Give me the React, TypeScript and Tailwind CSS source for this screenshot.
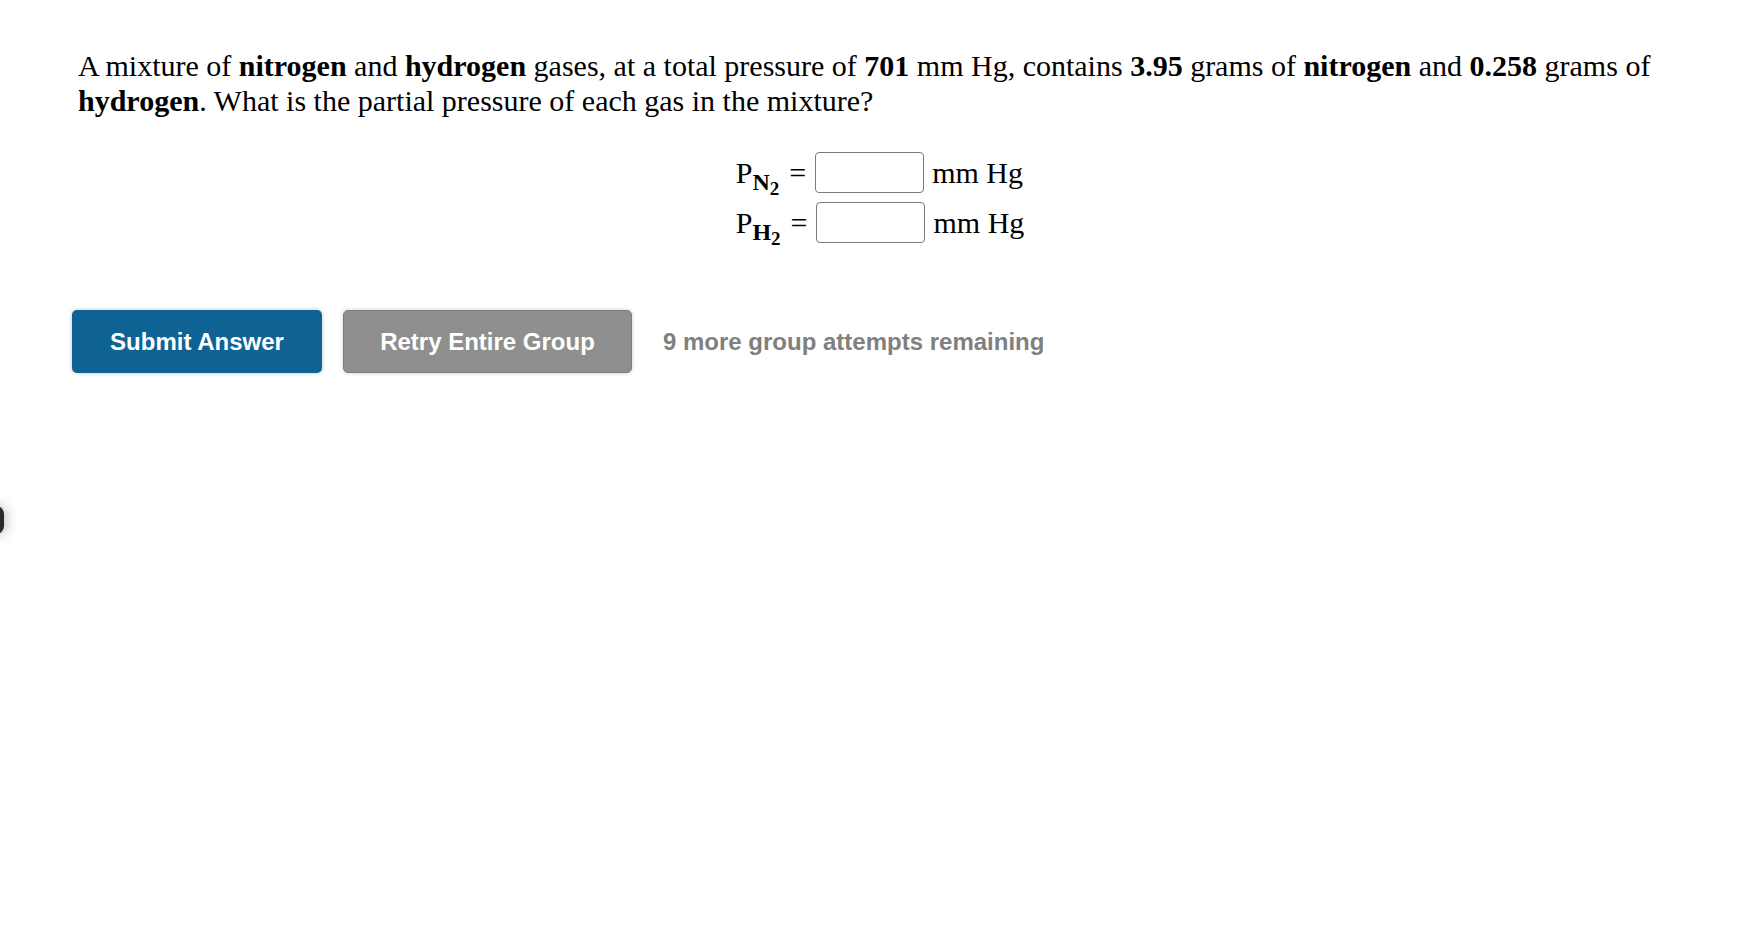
import React from "react";

function Label({ sub }: { sub: string }) {
  return (
    <span className="whitespace-nowrap text-[30px] leading-none">
      P
      <span className="relative top-[7px] text-[24px] font-bold">
        {sub}
        <span className="relative top-[5px] text-[19px]">2</span>
      </span>
    </span>
  );
}

function PressureRow({ sub }: { sub: string }) {
  return (
    <div className="flex items-center">
      <Label sub={sub} />
      <span className="ml-[10px] mr-[9px] text-[30px] leading-none">=</span>
      <input
        type="text"
        aria-label={`partial pressure of ${sub}2`}
        className="h-[41px] w-[109px] rounded-[4px] border-[1.5px] border-[#7a7a7a] bg-white outline-none"
      />
      <span className="ml-[8px] text-[30px] leading-none">mm Hg</span>
    </div>
  );
}

export default function App() {
  return (
    <div className="relative min-h-screen bg-white text-black">
      <div className="pl-[78px] pr-[60px] pt-[48px] font-['Liberation_Serif',serif]">
        <p className="text-[30px] leading-[35px]">
          A mixture of <b>nitrogen</b> and <b>hydrogen</b> gases, at a total pressure of <b>701</b> mm Hg,
          contains <b>3.95</b> grams of <b>nitrogen</b> and <b>0.258</b> grams of <b>hydrogen</b>. What is the
          partial pressure of each gas in the mixture?
        </p>

        <div className="mt-[34px] flex justify-center pl-[4px]">
          <div className="flex flex-col gap-[9px]">
            <PressureRow sub="N" />
            <PressureRow sub="H" />
          </div>
        </div>
      </div>

      <div className="mt-[67px] flex items-center pl-[72px] font-['Liberation_Sans',Arial,sans-serif]">
        <button className="h-[63px] w-[250px] rounded-[5px] bg-[#0f6294] text-[24px] font-bold text-white shadow-[0_0_4px_rgba(0,0,0,0.25)]">
          Submit Answer
        </button>
        <button className="ml-[21px] h-[63px] w-[289px] rounded-[5px] border border-[#7c7c7c] bg-[#8f8f8f] text-[24px] font-bold text-white shadow-[0_0_4px_rgba(0,0,0,0.2)]">
          Retry Entire Group
        </button>
        <span className="ml-[31px] text-[24px] font-bold text-[#808080]">9 more group attempts remaining</span>
      </div>

      <div className="absolute left-[-12px] top-[506px] h-[28px] w-[16px] rounded-full bg-[#2a2a2a] shadow-[0_0_14px_rgba(0,0,0,0.35)]" />
    </div>
  );
}
